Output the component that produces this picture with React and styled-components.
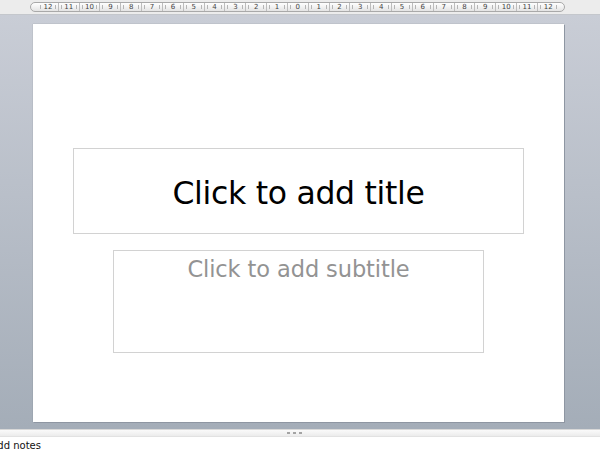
import React from "react";
import styled, { createGlobalStyle } from "styled-components";

const Global = createGlobalStyle`
  html, body { margin: 0; padding: 0; overflow: hidden; }
  body { font-family: "DejaVu Sans", "Liberation Sans", sans-serif; }
`;

const Window = styled.div`
  width: 600px;
  height: 459px;
  display: flex;
  flex-direction: column;
  background: #ffffff;
  overflow: hidden;
`;

const RulerBar = styled.div`
  height: 15px;
  flex: none;
  background: #ececec;
  border-bottom: 1px solid #c4c7cc;
  display: flex;
  align-items: flex-start;
  padding: 2px 0 0 30px;
  box-sizing: border-box;
`;

const RulerPill = styled.div`
  width: 535px;
  height: 10px;
  box-sizing: border-box;
  border: 1px solid #a9a9a9;
  border-radius: 6px;
  background: linear-gradient(#ffffff, #e4e4e4);
  display: flex;
  align-items: center;
  padding-left: 7px;
`;

const RulerCell = styled.div`
  width: 20.83px;
  flex: none;
  height: 8px;
  position: relative;
  display: flex;
  justify-content: center;
  align-items: center;
  font-size: 7px;
  line-height: 8px;
  color: #444;
  border-right: ${(p) => (p.$last ? "none" : "1px solid #bdbdbd")};
  box-sizing: border-box;
  &::before,
  &::after {
    content: "";
    position: absolute;
    top: 2px;
    width: 1px;
    height: 4px;
    background: #b5b5b5;
  }
  &::before { left: 2px; }
  &::after { right: 2px; }
`;

const Canvas = styled.div`
  flex: none;
  height: 414px;
  background: linear-gradient(#c9cdd6, #a4adb8);
  padding: 9px 0 0 33px;
  box-sizing: border-box;
`;

const Slide = styled.div`
  width: 531px;
  height: 398px;
  background: #ffffff;
  box-shadow: 1px 1px 0 #8e96a2, 0 0 1px rgba(0, 0, 0, 0.25);
  display: flex;
  flex-direction: column;
  align-items: center;
  padding-top: 124px;
  gap: 16px;
  box-sizing: border-box;
`;

const Placeholder = styled.div`
  width: ${(p) => p.$w}px;
  height: ${(p) => p.$h}px;
  box-sizing: border-box;
  border: 1px solid #d2d2d2;
  display: flex;
  justify-content: center;
  align-items: ${(p) => (p.$top ? "flex-start" : "center")};
  padding-top: ${(p) => (p.$top ? "5px" : "3px")};
`;

const TitleText = styled.div`
  font-family: "DejaVu Sans", sans-serif;
  font-size: 31.5px;
  color: #000000;
  letter-spacing: -0.3px;
`;

const SubtitleText = styled.div`
  font-family: "DejaVu Sans", sans-serif;
  font-size: 22.5px;
  color: #939393;
  letter-spacing: -0.1px;
`;

const Splitter = styled.div`
  flex: none;
  height: 6px;
  background: linear-gradient(#fafafa, #ececec);
  border-top: 1px solid #d8d8d8;
  border-bottom: 1px solid #e2e2e2;
  display: flex;
  justify-content: center;
  align-items: center;
  gap: 3px;
  padding-right: 12px;
`;

const Dot = styled.span`
  width: 3px;
  height: 2px;
  background: #a4a4a4;
`;

const Notes = styled.div`
  flex: 1;
  background: #ffffff;
  font-family: "DejaVu Sans", sans-serif;
  font-size: 10px;
  color: #111;
  padding-top: 3px;
  white-space: nowrap;
  overflow: hidden;
`;

const NotesText = styled.span`
  display: inline-block;
  margin-left: -49px;
`;

const labels = [12, 11, 10, 9, 8, 7, 6, 5, 4, 3, 2, 1, 0, 1, 2, 3, 4, 5, 6, 7, 8, 9, 10, 11, 12];

export default function App() {
  return (
    <>
      <Global />
      <Window>
        <RulerBar>
          <RulerPill>
            {labels.map((n, i) => (
              <RulerCell key={i} $last={i === labels.length - 1}>
                {n}
              </RulerCell>
            ))}
          </RulerPill>
        </RulerBar>
        <Canvas>
          <Slide>
            <Placeholder $w={451} $h={86}>
              <TitleText>Click to add title</TitleText>
            </Placeholder>
            <Placeholder $w={371} $h={103} $top>
              <SubtitleText>Click to add subtitle</SubtitleText>
            </Placeholder>
          </Slide>
        </Canvas>
        <Splitter>
          <Dot />
          <Dot />
          <Dot />
        </Splitter>
        <Notes>
          <NotesText>Click to add notes</NotesText>
        </Notes>
      </Window>
    </>
  );
}
